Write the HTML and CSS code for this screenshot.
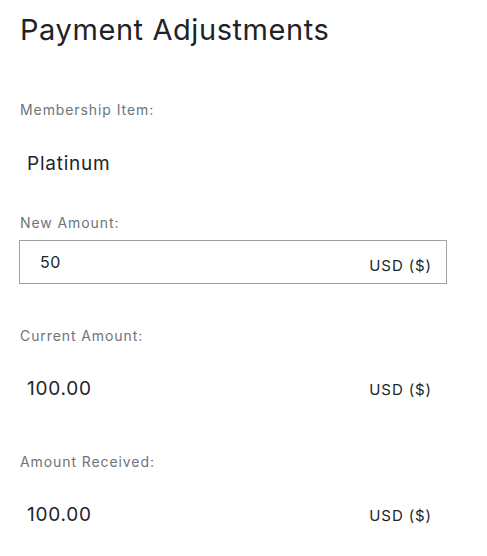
FILE: index.html
```html
<!DOCTYPE html>
<html>
<head>
<meta charset="utf-8">
<link rel="stylesheet" href="styles.css">
</head>
<body>
<div class="page">
  <h1 class="title">Payment Adjustments</h1>
  <div class="field field-first">
    <div class="label">Membership Item:</div>
    <div class="value-row value-row-item">
      <span class="value">Platinum</span>
    </div>
  </div>
  <div class="field field-input">
    <div class="label">New Amount:</div>
    <div class="input">
      <span class="input-value">50</span>
      <span class="currency currency-input">USD ($)</span>
    </div>
  </div>
  <div class="field field-after-input">
    <div class="label">Current Amount:</div>
    <div class="value-row">
      <span class="value">100.00</span>
      <span class="currency">USD ($)</span>
    </div>
  </div>
  <div class="field field-last">
    <div class="label">Amount Received:</div>
    <div class="value-row">
      <span class="value">100.00</span>
      <span class="currency">USD ($)</span>
    </div>
  </div>
</div>
</body>
</html>
```

FILE: styles.css
```css
html, body {
  margin: 0;
  padding: 0;
  background: #ffffff;
}
body {
  font-family: Inter, "Noto Sans", sans-serif;
  color: #212529;
}
.page {
  width: 427px;
  padding: 12px 0 0 20px;
}
.title {
  margin: 0;
  font-size: 29px;
  font-weight: 400;
  line-height: 36px;
  letter-spacing: 0.02em;
  color: #1f2328;
}
.field-first {
  margin-top: 52px;
}
.field-input {
  margin-top: 37px;
}
.field-after-input {
  margin-top: 42px;
}
.field-last {
  margin-top: 51px;
}
.label {
  font-size: 14px;
  line-height: 20px;
  letter-spacing: 0.065em;
  color: #6c757d;
}
.value-row {
  margin-top: 31px;
  height: 24px;
  display: flex;
  justify-content: space-between;
  align-items: baseline;
  padding-right: 15px;
}
.value-row-item {
  margin-top: 32px;
}
.value {
  font-size: 19px;
  line-height: 24px;
  letter-spacing: 0.04em;
  color: #212529;
  padding-left: 7px;
}
.input {
  margin-top: 7px;
  margin-left: -1px;
  height: 42px;
  border: 1px solid #a0a0a0;
  display: flex;
  align-items: center;
  justify-content: space-between;
  padding: 0 14px 0 20px;
}
.input-value {
  font-size: 16px;
  letter-spacing: 0.04em;
  color: #212529;
}
.currency {
  font-size: 15px;
  letter-spacing: 0.06em;
  color: #212529;
}
.currency-input {
  padding-top: 7px;
}
```
